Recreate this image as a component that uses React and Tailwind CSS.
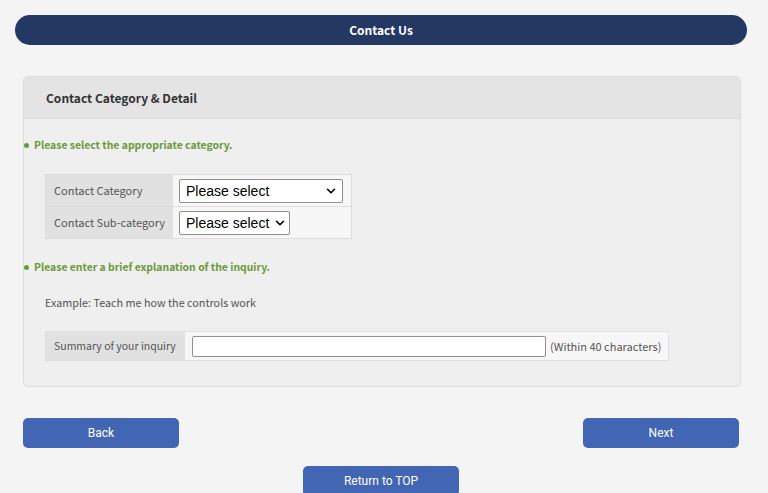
import React from 'react';
import { ChevronDown } from 'lucide-react';

const FakeSelect = ({ width }) => (
  <div
    className={`flex shrink-0 items-center justify-between h-[24px] ${width} bg-white border border-[#8f8f8f] rounded-[2px] pl-[6px] pr-[4px] text-[14px] leading-none whitespace-nowrap text-black font-['Liberation_Sans',Arial,sans-serif]`}
  >
    <span>Please select</span>
    <ChevronDown className="w-[14px] h-[14px] ml-[4px] shrink-0" strokeWidth={2.75} />
  </div>
);

const Bullet = ({ children }) => (
  <div className="flex items-center gap-[5px] h-[14px] leading-none text-[10.4px] font-bold text-[#6b9a3b]">
    <span className="w-[5px] h-[5px] rounded-full bg-[#6b9a3b]" />
    {children}
  </div>
);

const Btn = ({ children }) => (
  <button className="w-[156px] h-[30px] rounded-[5px] bg-[#4366b4] text-white text-[12px] font-['Roboto',sans-serif]">
    {children}
  </button>
);

const App = () => {
  return (
    <div className="w-[768px] h-[493px] overflow-hidden bg-[#f4f4f4] font-['Noto_Sans_CJK_JP','Noto_Sans',sans-serif] pt-[15px]">
      <div className="w-[762px]">
        {/* Title bar */}
        <div className="mx-[15px] h-[30px] rounded-full bg-[#233863] flex items-center justify-center text-white text-[12px] font-bold">
          Contact Us
        </div>

        {/* Card */}
        <div className="ml-[23px] w-[718px] mt-[31px] h-[311px] bg-[#efefef] border border-[#dcdcdc] rounded-[5px] overflow-hidden">
          <div className="h-[42px] bg-[#e4e4e4] border-b border-[#dadada] flex items-center pl-[22px] text-[12px] font-bold text-[#333]">
            Contact Category &amp; Detail
          </div>

          <div className="pt-[19px]">
            <Bullet>Please select the appropriate category.</Bullet>

            <div className="ml-[21px] mt-[22px] w-[307px] border border-[#dcdcdc] text-[11px] leading-none text-[#555]">
              <div className="flex h-[32px] border-b border-[#dcdcdc]">
                <div className="w-[127px] bg-[#e1e1e1] flex items-center pl-[8px]">Contact Category</div>
                <div className="flex-1 bg-[#f7f7f7] flex items-center pl-[6px]">
                  <FakeSelect width="w-[164px]" />
                </div>
              </div>
              <div className="flex h-[31px]">
                <div className="w-[127px] bg-[#e1e1e1] flex items-center pl-[8px]">Contact Sub-category</div>
                <div className="flex-1 bg-[#f7f7f7] flex items-center pl-[6px]">
                  <FakeSelect width="w-[111px]" />
                </div>
              </div>
            </div>

            <div className="mt-[21px]">
              <Bullet>Please enter a brief explanation of the inquiry.</Bullet>
            </div>

            <div className="ml-[21px] mt-[21px] h-[14px] leading-none flex items-center text-[10.8px] text-[#555]">
              Example: Teach me how the controls work
            </div>

            <div className="ml-[21px] mt-[22px] w-[624px] h-[30px] flex border border-[#e0e0e0] text-[10.5px] leading-none text-[#555]">
              <div className="w-[139px] bg-[#e1e1e1] flex items-center pl-[8px]">Summary of your inquiry</div>
              <div className="flex-1 bg-[#f7f7f7] flex items-center pl-[7px]">
                <div className="w-[354px] h-[21px] bg-white border border-[#8f8f8f] rounded-[2px]" />
                <span className="ml-[4px] text-[11px]">(Within 40 characters)</span>
              </div>
            </div>
          </div>
        </div>

        {/* Buttons */}
        <div className="ml-[23px] w-[716px] mt-[31px] flex justify-between">
          <Btn>Back</Btn>
          <Btn>Next</Btn>
        </div>
        <div className="mt-[18px] ml-[303px]">
          <Btn>Return to TOP</Btn>
        </div>
      </div>
    </div>
  );
};

export default App;
